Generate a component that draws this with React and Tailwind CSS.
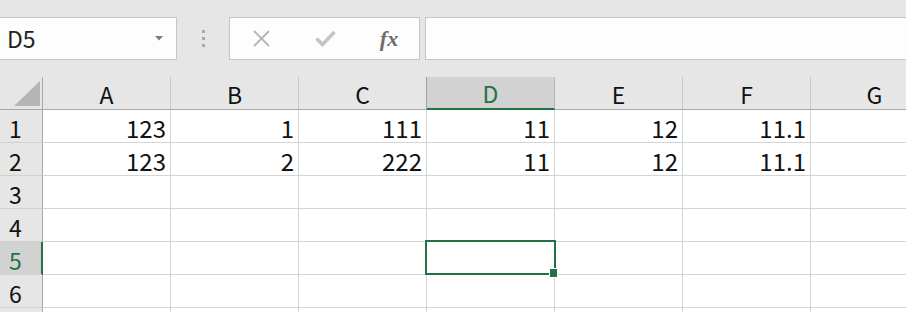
import React from "react";

const FONT = { fontFamily: '"Noto Sans CJK SC", "Noto Sans", sans-serif' };
const COLS = ["A", "B", "C", "D", "E", "F", "G"];
const DATA = [
  ["123", "1", "111", "11", "12", "11.1", ""],
  ["123", "2", "222", "11", "12", "11.1", ""],
  ["", "", "", "", "", "", ""],
  ["", "", "", "", "", "", ""],
  ["", "", "", "", "", "", ""],
  ["", "", "", "", "", "", ""],
  ["", "", "", "", "", "", ""],
];

function TopBar() {
  return (
    <div className="flex h-[77px] bg-[#e6e6e6] pt-[17px]">
      <div className="flex h-[43px] w-[177px] shrink-0 items-center justify-between border-y border-r border-[#c6c6c6] bg-[#fdfdfd] pl-[7px] pr-[13px]">
        <span className="text-[23px] leading-none text-[#222]">D5</span>
        <svg width="8" height="5" viewBox="0 0 8 5">
          <path d="M0 0 H8 L4 4.5 Z" fill="#7b7b7b" />
        </svg>
      </div>
      <div className="flex h-[43px] w-[52px] shrink-0 flex-col items-center justify-center gap-[4px]">
        <span className="block h-[3px] w-[3px] bg-[#a9a9a9]" />
        <span className="block h-[3px] w-[3px] bg-[#a9a9a9]" />
        <span className="block h-[3px] w-[3px] bg-[#a9a9a9]" />
      </div>
      <div className="flex h-[43px] w-[191px] shrink-0 items-center border border-[#c6c6c6] bg-[#fdfdfd]">
        <div className="flex w-[62px] justify-center pl-[0px]">
          <svg width="17" height="17" viewBox="0 0 17 17">
            <path d="M1 1 L16 16 M16 1 L1 16" stroke="#b4b4b4" strokeWidth="1.8" fill="none" />
          </svg>
        </div>
        <div className="flex w-[62px] justify-center pl-[4px]">
          <svg width="21" height="17" viewBox="0 0 21 17">
            <path d="M1.5 8.5 L7.5 14.5 L19.5 2" stroke="#c4c4c4" strokeWidth="3.6" fill="none" />
          </svg>
        </div>
        <div className="flex w-[62px] justify-center pl-[8px]">
          <span
            className="text-[22px] italic font-semibold leading-none text-[#6d6d6d]"
            style={{ fontFamily: '"Liberation Serif", "DejaVu Serif", serif' }}
          >
            fx
          </span>
        </div>
      </div>
      <div className="ml-[5px] h-[43px] flex-1 border-y border-l border-[#c6c6c6] bg-[#fdfdfd]" />
    </div>
  );
}

function HeaderRow() {
  return (
    <div className="flex h-[33px]">
      <div className="relative h-[33px] w-[43px] shrink-0 border-r border-b border-[#a8a8a8] bg-[#e6e6e6]">
        <svg className="absolute left-0 top-0" width="42" height="32" viewBox="0 0 42 32">
          <path d="M40 4 V29 H14 Z" fill="#b5b5b5" />
        </svg>
      </div>
      {COLS.map((c) => {
        const sel = c === "D";
        const before = c === "C";
        return (
          <div
            key={c}
            className={
              "flex h-[33px] w-[128px] shrink-0 items-end justify-center border-r pb-[3px] text-[23px] leading-none " +
              (sel
                ? "border-b-2 border-r-[#b5b5b5] border-b-[#217346] bg-[#d2d2d2] text-[#217346]"
                : before
                ? "border-b border-r-[#9e9e9e] border-b-[#a8a8a8] bg-[#e6e6e6] text-[#111]"
                : "border-b border-r-[#c8c8c8] border-b-[#a8a8a8] bg-[#e6e6e6] text-[#111]")
            }
          >
            {c}
          </div>
        );
      })}
    </div>
  );
}

function Row({ n, cells, label }) {
  const sel = n === 5;
  return (
    <div className="flex h-[33px]">
      <div
        className={
          "flex h-[33px] w-[43px] shrink-0 items-end border-b border-b-[#d0d0d0] pl-[9px] pb-[2px] text-[23px] leading-none " +
          (sel
            ? "border-r-2 border-r-[#217346] bg-[#d2d2d2] text-[#217346]"
            : "border-r border-r-[#a8a8a8] bg-[#e6e6e6] text-[#111]")
        }
      >
        {label ? n : null}
      </div>
      {cells.map((v, i) => {
        const active = sel && i === 3;
        return (
          <div
            key={i}
            className="relative flex h-[33px] w-[128px] shrink-0 items-end justify-end border-r border-b border-[#d4d4d4] bg-white pr-[4px] pb-[2px] text-[24px] leading-none text-[#111]"
          >
            {v}
            {active && (
              <>
                <div className="pointer-events-none absolute left-[-2px] top-[-2px] z-10 h-[35px] w-[131px] border-2 border-[#217346]" />
                <div className="pointer-events-none absolute left-[122px] top-[26px] z-20 h-[10px] w-[9px] border border-white bg-[#217346]" />
              </>
            )}
          </div>
        );
      })}
    </div>
  );
}

export default function App() {
  return (
    <div className="h-[312px] w-[906px] overflow-hidden bg-white" style={FONT}>
      <TopBar />
      <div className="w-[1000px]">
        <HeaderRow />
        {DATA.map((r, i) => (
          <Row key={i} n={i + 1} cells={r} label={i < 6} />
        ))}
      </div>
    </div>
  );
}
